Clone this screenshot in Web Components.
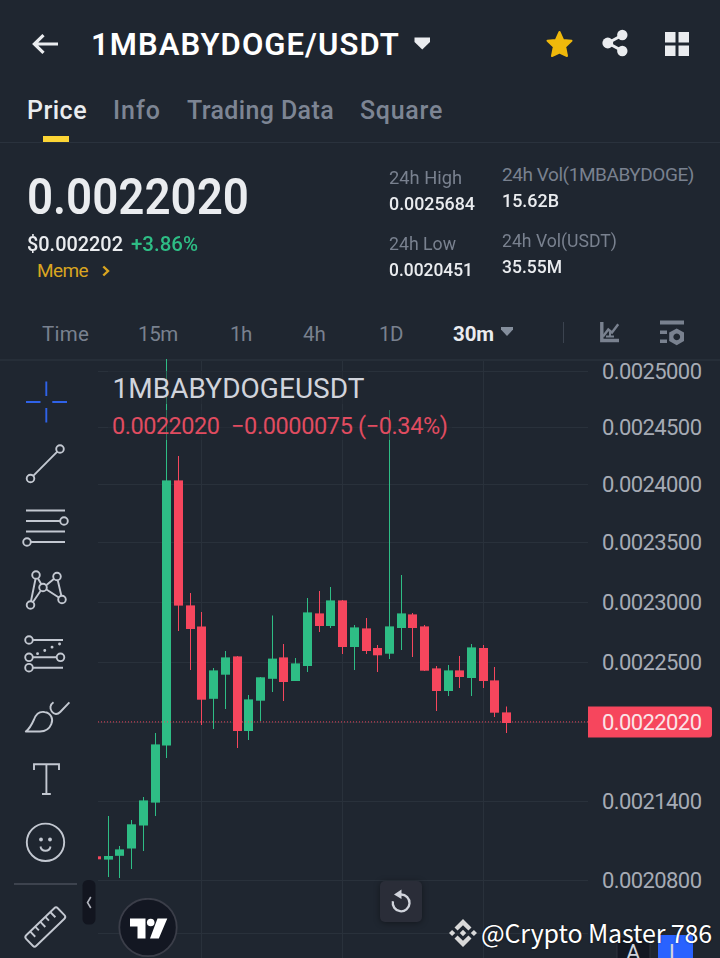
<!DOCTYPE html>
<html lang="en">
<head>
<meta charset="utf-8">
<title>1MBABYDOGE/USDT</title>
<style>
  body {
    margin: 0;
    background: #1f2630;
    overflow: hidden;
  }
</style>
</head>
<body>
<trading-screen></trading-screen>

<script>
const GREEN = '#2ebd85';
const RED = '#f6465d';

// text stretched or squeezed to a given width, by tracking or by scaling
class FitText extends HTMLElement {
  constructor() {
    super();
    this.attachShadow({ mode: 'open' });
    this.shadowRoot.innerHTML = `
      <style>
        :host { display: block; flex: none; white-space: nowrap; }
        span { display: inline-block; transform-origin: 0 50%; }
      </style>
      <span><slot></slot></span>
    `;
  }
  connectedCallback() {
    const width = Number(this.getAttribute('w'));
    const span = this.shadowRoot.querySelector('span');
    this.style.width = width + 'px';
    const natural = span.getBoundingClientRect().width;
    if (this.hasAttribute('scale')) {
      span.style.transform = `scaleX(${width / natural})`;
    } else {
      const nodes = this.shadowRoot.querySelector('slot').assignedNodes({ flatten: true });
      const count = nodes.map((n) => n.textContent).join('').length;
      span.style.letterSpacing = (width - natural) / count + 'px';
    }
  }
}

class PairHeader extends HTMLElement {
  constructor() {
    super();
    this.attachShadow({ mode: 'open' });
    this.shadowRoot.innerHTML = `
      <style>
        :host {
          display: flex;
          align-items: center;
          height: 88px;
          box-sizing: border-box;
          padding: 0 31px 0 32px;
          color: #fff;
        }
        svg { display: block; flex: none; }
        fit-text { font-size: 31px; font-weight: 600; line-height: 40px; margin: 2px 14px 0 32px; }
        .actions { display: flex; align-items: center; margin-left: auto; }
        .share { margin: 0 37px 0 29px; }
      </style>
      <svg width="27" height="20" viewBox="0 0 27 20" fill="none" stroke="#eaecef" stroke-width="3.2" style="margin-bottom:1px">
        <path d="M26 10H2M11.500 1.200 2.400 10l9.100 8.800"/>
      </svg>
      <fit-text w="309"><slot></slot></fit-text>
      <svg width="17" height="13" viewBox="0 0 17 13" fill="#eaecef" style="margin-bottom:2px"><path d="M.500.500h15.500v4.500l-7.750 7.500L.500 5z"/></svg>
      <div class="actions">
        <svg width="27" height="28" viewBox="0 0 27 28" fill="#f0b90b" stroke="#f0b90b" stroke-width="2" stroke-linejoin="round">
          <path d="M13.500 2l3.600 7.900 8.400.900-6.300 5.900 1.800 9.300-7.500-3.500L6 26l1.800-9.300L1.500 10.800l8.400-.9z"/>
        </svg>
        <svg class="share" width="26" height="28" viewBox="0 0 26 28" fill="#eaecef" style="margin-bottom:2px">
          <path d="M20.500 6 6 14l14.500 8" fill="none" stroke="#eaecef" stroke-width="3"/>
          <circle cx="20.300" cy="6" r="5.200"/><circle cx="5.800" cy="14" r="5.400"/><circle cx="20.300" cy="22" r="5.200"/>
        </svg>
        <svg width="24" height="24" viewBox="0 0 24 24" fill="#eaecef" style="margin-bottom:1px">
          <path d="M0 0h10.500v10.500H0zM13.500 0H24v10.500H13.500zM0 13.500h10.500V24H0zM13.500 13.500H24V24H13.500z"/>
        </svg>
      </div>
    `;
  }
}

class PageTabs extends HTMLElement {
  constructor() {
    super();
    this.attachShadow({ mode: 'open' });
    const tabs = [['Price', 60], ['Info', 48], ['Trading Data', 147], ['Square', 83]];
    this.shadowRoot.innerHTML = `
      <style>
        :host {
          display: flex;
          gap: 26px;
          height: 54px;
          padding-left: 27px;
          border-bottom: 1px solid #2a323d;
          color: #7d8594;
          font-size: 25px;
          font-weight: 500;
          line-height: 46px;
        }
        .tab { display: flex; flex-direction: column; align-items: center; justify-content: space-between; }
        .tab.active { color: #eaecef; }
        .active::after { content: ''; width: 26px; height: 6px; margin-left: -2px; background: #fcd535; }
      </style>
      ${tabs.map(([name, w], i) => `
        <div class="tab ${i === 0 ? 'active' : ''}"><fit-text w="${w}">${name}</fit-text></div>
      `).join('')}
    `;
  }
}

class PriceSummary extends HTMLElement {
  constructor() {
    super();
    this.attachShadow({ mode: 'open' });
    this.shadowRoot.innerHTML = `
      <style>
        :host { display: flex; height: 165px; color: #eaecef; font-size: 19px; }
        .main { width: 389px; padding: 29px 0 0 27px; box-sizing: border-box; }
        .last { font-size: 50px; font-weight: 600; line-height: 51px; margin-bottom: 7px; }
        .fiat { display: flex; gap: 8px; line-height: 28px; font-size: 20.500px; font-weight: 500; }
        .up { color: #2ebd85; }
        .tag { display: flex; align-items: center; gap: 14px; padding-left: 10px; line-height: 26px; color: #d9a520; }
        .stats { width: 113px; padding-top: 22px; }
        .stats.vol { padding-top: 19px; }
        .stats fit-text { line-height: 26px; font-weight: 500; }
        .stats .label { color: #79818f; font-weight: 400; }
        .stats .value { margin-bottom: 14px; }
      </style>
      <div class="main">
        <fit-text class="last" w="222" scale>0.0022020</fit-text>
        <div class="fiat">
          <fit-text w="96" scale>$0.002202</fit-text>
          <fit-text class="up" w="67" scale>+3.86%</fit-text>
        </div>
        <div class="tag">
          <fit-text w="51">Meme</fit-text>
          <svg width="8" height="12" viewBox="0 0 8 12" fill="none" stroke="#d9a520" stroke-width="2.400"><path d="M1.300 1.500 6 6l-4.700 4.500"/></svg>
        </div>
      </div>
      <div class="stats">
        <fit-text class="label" w="73" scale>24h High</fit-text>
        <fit-text class="value" w="86" scale>0.0025684</fit-text>
        <fit-text class="label" w="67" scale>24h Low</fit-text>
        <fit-text class="value" w="84" scale>0.0020451</fit-text>
      </div>
      <div class="stats vol">
        <fit-text class="label" w="192">24h Vol(1MBABYDOGE)</fit-text>
        <fit-text class="value" w="57" scale>15.62B</fit-text>
        <fit-text class="label" w="115" scale>24h Vol(USDT)</fit-text>
        <fit-text class="value" w="60" scale>35.55M</fit-text>
      </div>
    `;
  }
}

class IntervalBar extends HTMLElement {
  constructor() {
    super();
    this.attachShadow({ mode: 'open' });
    // label, text width, gap before it
    const intervals = [['Time', 47, 42], ['15m', 40, 49], ['1h', 22, 52], ['4h', 23, 51], ['1D', 24, 53]];
    this.shadowRoot.innerHTML = `
      <style>
        :host {
          display: flex;
          align-items: center;
          height: 51px;
          border-bottom: 2px solid #262e38;
          color: #79818f;
          font-size: 20.500px;
          line-height: 30px;
        }
        svg { flex: none; }
        .current { color: #eaecef; font-weight: 700; margin: 0 7px 0 50px; }
        .rule { width: 1px; height: 21px; margin: 0 36px 3px 50px; background: #3b434f; }
      </style>
      ${intervals.map(([name, w, gap]) => `<fit-text w="${w}" style="margin-left:${gap}px">${name}</fit-text>`).join('')}
      <fit-text class="current" w="41">30m</fit-text>
      <svg width="12" height="9" viewBox="0 0 12 9" fill="#848e9c" style="margin-bottom:4px"><path d="M0 0h12v2.500L6 9 0 2.500z"/></svg>
      <div class="rule"></div>
      <svg width="20" height="21" viewBox="0 0 20 21" fill="none" stroke="#79818f" style="margin-bottom:3px">
        <path d="M1.800 0v18.500H19" stroke-width="3.400"/>
        <path d="M3 14.500 8.300 7.500l3.700 3 6.200-8.300" stroke-width="2.400"/>
        <path d="M6 14.500h8M10 10v4" stroke-width="2"/>
      </svg>
      <svg width="25" height="26" viewBox="0 0 25 26" fill="#79818f" style="margin:0 0 2px 40px">
        <path d="M0 .500h24v4H0zM0 10.500h7v3.500H0zM0 19.500h7v3.500H0z"/>
        <path fill-rule="evenodd" d="M16.700 8.500l7.300 4v8.500l-7.300 4.200-7.500-4.200v-8.500zM16.700 13.400a3.400 3.400 0 1 0 .1 0z"/>
      </svg>
    `;
  }
}

const TOOLS = [
  `<g stroke="#2f62e8"><path d="M12 32h14.500M38.300 32H53M32.300 11.500V26M32.300 38v14.500"/></g>`,
  `<path d="M43.300 18.700 19.200 42.800"/><circle cx="46" cy="16" r="3.800"/><circle cx="16.500" cy="45.500" r="3.800"/>`,
  `<path d="M12 14.500h39M12 25h34M12 35.500h39M17 46h34"/><circle cx="50" cy="25" r="3.800"/><circle cx="13" cy="46" r="3.800"/>`,
  `<path d="M21.500 20 17 42M24 19.500l3.200 5.500M19 43l7.500-11M32.500 26l7.300-6M43.800 21.500l3.500 15M32.500 30.500l12.300 8"/>
   <circle cx="22" cy="16" r="3.800"/><circle cx="43" cy="17.500" r="3.800"/><circle cx="29" cy="28.500" r="3.800"/>
   <circle cx="16.500" cy="46" r="3.800"/><circle cx="48" cy="40.500" r="3.800"/>`,
  `<path d="M19 18h30M19 35.300h23.500M19 45.700h30"/><circle cx="15" cy="18" r="3.800"/><circle cx="15" cy="35.300" r="3.800"/>
   <circle cx="46.500" cy="35.300" r="3.800"/><circle cx="15" cy="45.700" r="3.800"/>
   <path d="M23.500 31.700l.1 0M30.700 28.500l.1 0M38 25.200l.1 0M45.500 22l.1 0" stroke-width="2.800" stroke-linecap="round"/>`,
  `<path d="M11.800 46.500C16 43.500 18 39 20 34.500c2-5.500 6-8.300 10.500-7.500 6.500 1 9.200 7 6.800 12.200-2 4.800-6 7.300-11.300 7.300z" stroke-linejoin="round"/>
   <path d="M39.500 17.200c-3.500 2.300-4 6.300-1.700 9.300 2.300 3.300 5.700 3.300 8.400.500l9.200-9.700"/>`,
  `<path d="M20 22v-5.800h25V22M32.400 16.200V46M28 46h8.800"/>`,
  `<circle cx="31.500" cy="31.300" r="18.700"/><path d="M26.500 35.500c.8 5.600 9.200 5.600 10 0"/>
   <g fill="#c3c8d1" stroke="none"><circle cx="27" cy="28.500" r="1.900"/><circle cx="36" cy="28.500" r="1.900"/></g>`,
];

const RULER = `<g transform="translate(31.300 32) rotate(-44)"><rect x="-22" y="-7.300" width="44" height="14.600" rx="2.500"/>
   <path d="M-14-7v7M-7-7v5M0-7v7M7-7v5M14-7v7"/></g>`;

class DrawingToolbar extends HTMLElement {
  constructor() {
    super();
    this.attachShadow({ mode: 'open' });
    const icon = (body) => `<svg width="64" height="63" viewBox="0 0 64 63">${body}</svg>`;
    this.shadowRoot.innerHTML = `
      <style>
        :host { display: flex; flex-direction: column; flex: none; width: 83px; box-sizing: border-box; padding: 9px 0 0 14px; }
        svg { display: block; flex: none; fill: none; stroke: #c3c8d1; stroke-width: 1.900; }
        hr { flex: none; width: 63px; height: 2px; margin: 9px 0 10px; border: 0; background: #3d434e; }
      </style>
      ${TOOLS.map(icon).join('')}
      <hr>
      ${icon(RULER)}
    `;
  }
}

// left edge, wick top, wick bottom, body top, body bottom, rising
const CANDLES = [
  [104, 816, 877, 856, 859.6, 1], [115, 846, 878, 849.4, 855.8, 1], [127, 820, 869, 824.3, 848.5, 1],
  [139, 797, 851, 800.4, 825.5, 1], [151, 733, 816, 744.4, 802.6, 1], [162, 359, 758, 480.4, 745.5, 1],
  [174, 456, 631, 480.4, 605.6, 0], [186, 593, 670, 605.4, 629, 0], [197, 612, 725, 626.5, 699.7, 0],
  [209, 668, 729, 670.4, 698.8, 1], [221, 651, 709, 657.4, 674.7, 1], [233, 656, 748, 656.4, 731, 0],
  [244, 695, 740, 699.4, 731, 1], [256, 677, 721, 677.3, 700.7, 1], [268, 615.5, 692, 658.6, 678.8, 1],
  [279, 644, 701, 657.4, 682, 0], [291, 658, 681, 663.4, 681, 1], [303, 598, 672, 612.4, 666, 1],
  [315, 591, 632, 613.4, 626, 0], [326, 587, 628, 600.4, 626, 1], [338, 600, 654, 600.4, 647, 0],
  [350, 625, 670, 627.4, 647, 1], [362, 618, 654, 628.4, 651, 0], [373, 645, 672, 648, 655.3, 0],
  [385, 410, 659, 626.4, 653.7, 1], [397, 575, 650, 613.4, 628, 1], [408, 613, 657, 614.4, 628, 0],
  [420, 625, 671, 626.4, 670.7, 0], [432, 666, 711, 668.4, 691, 0], [444, 665, 696, 670.4, 691, 1],
  [455, 656, 688, 670.4, 677, 0], [467, 644, 696, 647.4, 678, 1], [479, 645, 688, 648, 681, 0],
  [490, 667, 717, 680.4, 712.7, 0], [502, 706.5, 733, 712.4, 723, 0],
];

const PRICES = [
  ['0.0025000', 371], ['0.0024500', 427], ['0.0024000', 484], ['0.0023500', 542], ['0.0023000', 602],
  ['0.0022500', 662], ['0.0021400', 801], ['0.0020800', 880],
];

class CandleChart extends HTMLElement {
  constructor() {
    super();
    this.attachShadow({ mode: 'open' });
    const candle = ([x, high, low, top, bottom, up]) => `
      <g fill="${up ? GREEN : RED}">
        <rect x="${x + 4}" y="${high}" width="1" height="${low - high}"/>
        <rect x="${x}" y="${top}" width="9" height="${bottom - top}"/>
      </g>`;
    this.shadowRoot.innerHTML = `
      <style>
        :host { display: block; flex: none; width: 637px; height: 597px; }
        svg { display: block; overflow: visible; }
        text { font-family: Roboto, sans-serif; }
      </style>
      <svg width="637" height="597" viewBox="83 361 637 597">
        <g fill="#29313b">
          ${[201, 342, 483].map((x) => `<rect x="${x}" y="361" width="1" height="597"/>`).join('')}
          ${[...PRICES.map((p) => p[1]), 722, 933].map((y) => `<rect x="98" y="${y}" width="490" height="1"/>`).join('')}
        </g>
        <rect x="98" y="856.300" width="3" height="3" fill="${RED}"/>
        ${CANDLES.map(candle).join('')}
        <path d="M98 721.800H588" stroke="${RED}" stroke-opacity=".75" stroke-width="1.200" stroke-dasharray="1 2"/>

        <rect x="108" y="371" width="260" height="33" fill="#1f2630" fill-opacity=".5"/>
        <rect x="108" y="410" width="344" height="30" fill="#1f2630" fill-opacity=".5"/>
        <text x="112.500" y="398" font-size="28" fill="#d1d4dc" textLength="252">1MBABYDOGEUSDT</text>
        <g font-size="23.500" fill="#e04c60">
          <text x="112" y="434" textLength="108">0.0022020</text>
          <text x="231" y="434" textLength="217">−0.0000075 (−0.34%)</text>
        </g>

        <g font-size="22" fill="#a6abb5">
          ${PRICES.map(([price, y]) => `<text x="602" y="${y + 8}" textLength="100">${price}</text>`).join('')}
        </g>
        <path d="M588 706.500h121a3 3 0 0 1 3 3v25a3 3 0 0 1-3 3H588z" fill="${RED}"/>
        <text x="602" y="730" font-size="22" fill="#fbe3e7" textLength="100">0.0022020</text>

        <rect x="617" y="937" width="33" height="30" fill="#131722" stroke="#2e333d"/>
        <rect x="658" y="935" width="35" height="30" rx="2" fill="#2962ff"/>
        <text x="626" y="960" font-size="22" fill="#d1d4dc">A</text>
        <text x="669" y="960" font-size="22" fill="#d1d4dc">L</text>
      </svg>
    `;
  }
}

class ChartPanel extends HTMLElement {
  constructor() {
    super();
    this.attachShadow({ mode: 'open' });
    this.shadowRoot.innerHTML = `
      <style>
        :host { display: flex; position: relative; height: 597px; }
        .over { position: absolute; display: block; }
        .handle { left: 82px; top: 519px; }
        .brand { left: 118px; top: 537px; }
        .reset { left: 376px; top: 516px; filter: drop-shadow(0 1px 3px rgba(0, 0, 0, .4)); }
        .credit {
          right: 8px;
          bottom: 7px;
          display: flex;
          align-items: center;
          gap: 4px;
          color: #fff;
          font: 25px/36px "Noto Sans CJK SC", "Noto Sans", sans-serif;
          text-shadow: 0 0 2px rgba(0, 0, 0, .6);
        }
        .credit fit-text { margin-bottom: 1px; }
      </style>
      <drawing-toolbar></drawing-toolbar>
      <candle-chart></candle-chart>
      <svg class="over handle" width="14" height="45" viewBox="0 0 14 45">
        <rect x=".5" y="0" width="13" height="44.500" rx="5.500" fill="#12151f"/>
        <path d="M8.800 17 5.500 22.500 8.800 28" fill="none" stroke="#b2b5be" stroke-width="1.600"/>
      </svg>
      <svg class="over brand" width="60" height="60" viewBox="0 0 60 60" fill="#fff">
        <circle cx="30" cy="29.500" r="28.700" fill="#131722" stroke="#3b3e49" stroke-width="1.800"/>
        <path d="M12 20.500h15.500v20h-8V28.500H12zM39.500 20.500h9.800l-8.500 20H32z"/><circle cx="32.700" cy="24.500" r="3.800"/>
      </svg>
      <svg class="over reset" width="50" height="50" viewBox="0 0 50 50">
        <rect x="4" y="4" width="42" height="41" rx="5" fill="#2a2d38"/>
        <path d="M16.900 24.200A8.400 8.400 0 1 0 25 17.500h-2" fill="none" stroke="#d1d4dc" stroke-width="2.300"/>
        <path d="M25.500 12.500v9.500l-7.500-4.500z" fill="#d1d4dc"/>
      </svg>
      <div class="over credit">
        <svg width="28" height="28" viewBox="0 0 28 28" fill="#d9d9d9">
          <path d="M14 0l8.500 8.500-3.100 3.100L14 6.200l-5.400 5.400-3.100-3.100zM14 28l-8.500-8.500 3.100-3.100 5.400 5.400 5.400-5.400 3.100 3.100zM3.100 10.900 6.200 14l-3.100 3.100L0 14zM24.900 10.900 28 14l-3.100 3.100-3.100-3.100zM14 10.800l3.200 3.200-3.200 3.200-3.200-3.200z"/>
        </svg>
        <fit-text w="231">@Crypto Master 786</fit-text>
      </div>
    `;
  }
}

class TradingScreen extends HTMLElement {
  constructor() {
    super();
    this.attachShadow({ mode: 'open' });
    this.shadowRoot.innerHTML = `
      <style>
        :host {
          display: flex;
          flex-direction: column;
          width: 720px;
          height: 958px;
          overflow: hidden;
          background: #1f2630;
          font-family: Roboto, "Noto Sans", sans-serif;
        }
        :host > * { flex: none; }
        pair-header, page-tabs, price-summary, interval-bar, chart-panel { flex: none; }
      </style>
      <pair-header>1MBABYDOGE/USDT</pair-header>
      <page-tabs></page-tabs>
      <price-summary></price-summary>
      <interval-bar></interval-bar>
      <chart-panel></chart-panel>
    `;
  }
}

// leaf elements last, so that fit-text measures with its styles in place
customElements.define('trading-screen', TradingScreen);
customElements.define('pair-header', PairHeader);
customElements.define('page-tabs', PageTabs);
customElements.define('price-summary', PriceSummary);
customElements.define('interval-bar', IntervalBar);
customElements.define('chart-panel', ChartPanel);
customElements.define('drawing-toolbar', DrawingToolbar);
customElements.define('candle-chart', CandleChart);
customElements.define('fit-text', FitText);
</script>
</body>
</html>
